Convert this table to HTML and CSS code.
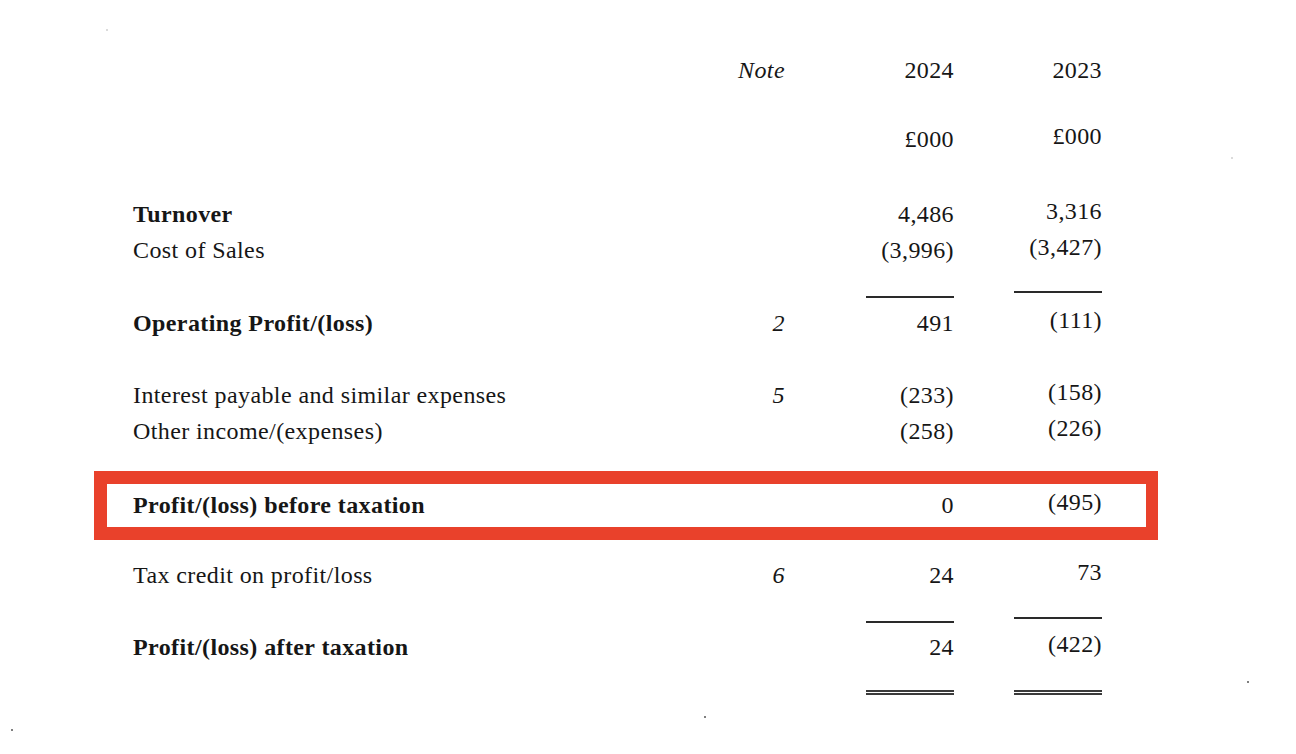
FILE: index.html
```html
<!DOCTYPE html>
<html lang="en">
<head>
<meta charset="utf-8">
<title>Profit and loss account</title>
<link rel="stylesheet" href="styles.css">
</head>
<body>
<div class="page">
  <div class="sheet">
    <div class="row head">
      <div></div>
      <div class="num note-h">Note</div>
      <div class="num">2024</div>
      <div class="num">2023</div>
    </div>
    <div class="row units">
      <div></div>
      <div></div>
      <div class="num">£000</div>
      <div class="num c23">£000</div>
    </div>
    <div class="row turnover">
      <div class="label b">Turnover</div>
      <div></div>
      <div class="num">4,486</div>
      <div class="num c23">3,316</div>
    </div>
    <div class="row">
      <div class="label">Cost of Sales</div>
      <div></div>
      <div class="num">(3,996)</div>
      <div class="num c23">(3,427)</div>
    </div>
    <div class="row rules r1">
      <div></div>
      <div></div>
      <div class="rule-cell"><div class="line l24"></div></div>
      <div class="rule-cell"><div class="line l23"></div></div>
    </div>
    <div class="row">
      <div class="label b">Operating Profit/(loss)</div>
      <div class="num note">2</div>
      <div class="num">491</div>
      <div class="num c23">(111)</div>
    </div>
    <div class="row interest">
      <div class="label">Interest payable and similar expenses</div>
      <div class="num note">5</div>
      <div class="num">(233)</div>
      <div class="num c23">(158)</div>
    </div>
    <div class="row">
      <div class="label">Other income/(expenses)</div>
      <div></div>
      <div class="num">(258)</div>
      <div class="num c23">(226)</div>
    </div>
    <div class="row highlight">
      <div class="label b">Profit/(loss) before taxation</div>
      <div></div>
      <div class="num">0</div>
      <div class="num c23">(495)</div>
    </div>
    <div class="row tax">
      <div class="label">Tax credit on profit/loss</div>
      <div class="num note">6</div>
      <div class="num">24</div>
      <div class="num c23">73</div>
    </div>
    <div class="row rules r2">
      <div></div>
      <div></div>
      <div class="rule-cell"><div class="line l24"></div></div>
      <div class="rule-cell"><div class="line l23b"></div></div>
    </div>
    <div class="row">
      <div class="label b">Profit/(loss) after taxation</div>
      <div></div>
      <div class="num">24</div>
      <div class="num c23">(422)</div>
    </div>
    <div class="row rules r3">
      <div></div>
      <div></div>
      <div class="rule-cell"><div class="dline"></div></div>
      <div class="rule-cell"><div class="dline"></div></div>
    </div>
  </div>
  <span class="speck s1"></span>
  <span class="speck s2"></span>
  <span class="speck s3"></span>
  <span class="speck s4 faint"></span>
  <span class="speck s5 faint"></span>
</div>
</body>
</html>
```
FILE: styles.css
```css
html, body {
  margin: 0;
  padding: 0;
  background: #ffffff;
}

.page {
  position: relative;
  width: 1296px;
  height: 754px;
  overflow: hidden;
  font-family: "Liberation Serif", "Times New Roman", serif;
  font-size: 24px;
  letter-spacing: 0.4px;
  color: #161616;
}

.sheet {
  margin-left: 94px;
  width: 1064px;
  padding-top: 52px;
}

.row {
  display: grid;
  grid-template-columns: 567px 85px 169px 148px;
  padding: 0 56px 0 39px;
  height: 36px;
  line-height: 36px;
  white-space: nowrap;
}

.units { margin-top: 33px; }
.turnover { margin-top: 39px; }
.interest { margin-top: 36px; }
.tax { margin-top: 17px; }

.rules.r1 { height: 37px; }
.rules.r2 { height: 36px; }
.rules.r3 { margin-top: 0; height: 40px; }

.label { text-align: left; }
.b { font-weight: bold; }

.num { text-align: right; }
.note-h { font-style: italic; }
.note { font-style: italic; }

.c23 { margin-top: -3px; }

.highlight {
  margin-top: 22px;
  border-style: solid;
  border-color: #e9412b;
  border-width: 13px 12px 13px 13px;
  padding: 3px 44px 4px 26px;
}

.rule-cell {
  display: flex;
  justify-content: flex-end;
  align-items: flex-start;
}

.line {
  width: 88px;
  border-top: 2px solid #2a2a2a;
}
.l24 { margin-top: 28px; }
.l23 { margin-top: 23px; }
.l23b { margin-top: 24px; }

.dline {
  width: 88px;
  height: 0;
  border-top: 5px double #3a3a3a;
  margin-top: 25px;
}

.speck {
  position: absolute;
  width: 2px;
  height: 2px;
  background: #555;
  border-radius: 1px;
}
.speck.faint { background: #cfcfcf; }
.s1 { left: 11px; top: 729px; }
.s2 { left: 1247px; top: 681px; }
.s3 { left: 704px; top: 716px; }
.s4 { left: 106px; top: 29px; }
.s5 { left: 1231px; top: 157px; }
```
